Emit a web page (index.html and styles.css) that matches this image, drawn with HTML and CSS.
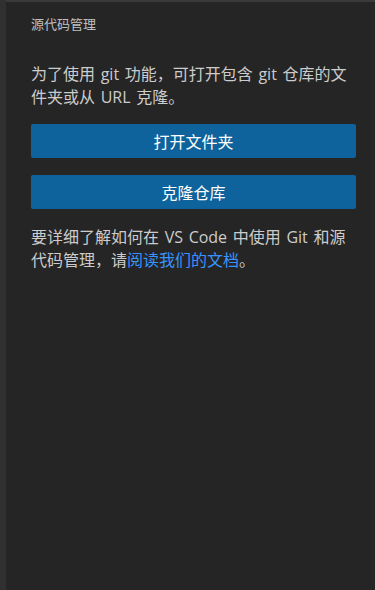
FILE: index.html
```html
<!DOCTYPE html>
<html lang="zh-CN">

<head>
    <meta charset="UTF-8">
    <meta name="viewport" content="width=device-width, initial-scale=1.0">
    <title>源代码管理</title>
    <link rel="stylesheet" href="styles.css">
</head>

<body>
    <div class="window">
        <div class="sash"></div>
        <main class="pane">
            <header class="pane-title">源代码管理</header>
            <section class="welcome">
                <p>为了使用 git 功能，可打开包含 git 仓库的文件夹或从 URL 克隆。</p>
                <button class="action-button">打开文件夹</button>
                <button class="action-button">克隆仓库</button>
                <p class="hint">要详细了解如何在 VS Code 中使用 Git 和源代码管理，请<a href="#">阅读我们的文档</a>。</p>
            </section>
        </main>
    </div>
</body>

</html>
```

FILE: styles.css
```css
* {
    box-sizing: border-box;
}

html,
body {
    height: 100%;
}

body {
    margin: 0;
    background-color: #252526;
    color: #cccccc;
    font-family: "Open Sans", "Noto Sans CJK SC", sans-serif;
}

.window {
    display: flex;
    height: 100%;
    border-top: 2px solid #3a3a3a;
}

.sash {
    width: 6px;
    flex-shrink: 0;
    background-color: #303030;
    margin-top: -2px;
}

.pane {
    flex: 1;
    padding: 0 19px 0 25px;
}

.pane-title {
    font-size: 13px;
    line-height: 22px;
    padding-top: 11px;
    color: #c0c0c0;
}

.welcome {
    padding-top: 28px;
}

.welcome p {
    margin: 0;
    font-size: 16px;
    line-height: 22.5px;
    word-spacing: 1.5px;
}

.action-button {
    display: block;
    width: 100%;
    height: 34px;
    margin-top: 17px;
    border: none;
    border-radius: 2px;
    background-color: #0e639c;
    color: #ffffff;
    font-family: inherit;
    font-size: 16px;
    cursor: pointer;
}

.action-button:first-of-type {
    margin-top: 16px;
}

.action-button:hover {
    background-color: #1177bb;
}

.welcome p.hint {
    margin-top: 17px;
}

.hint a {
    color: #3794ff;
    text-decoration: none;
}
```
